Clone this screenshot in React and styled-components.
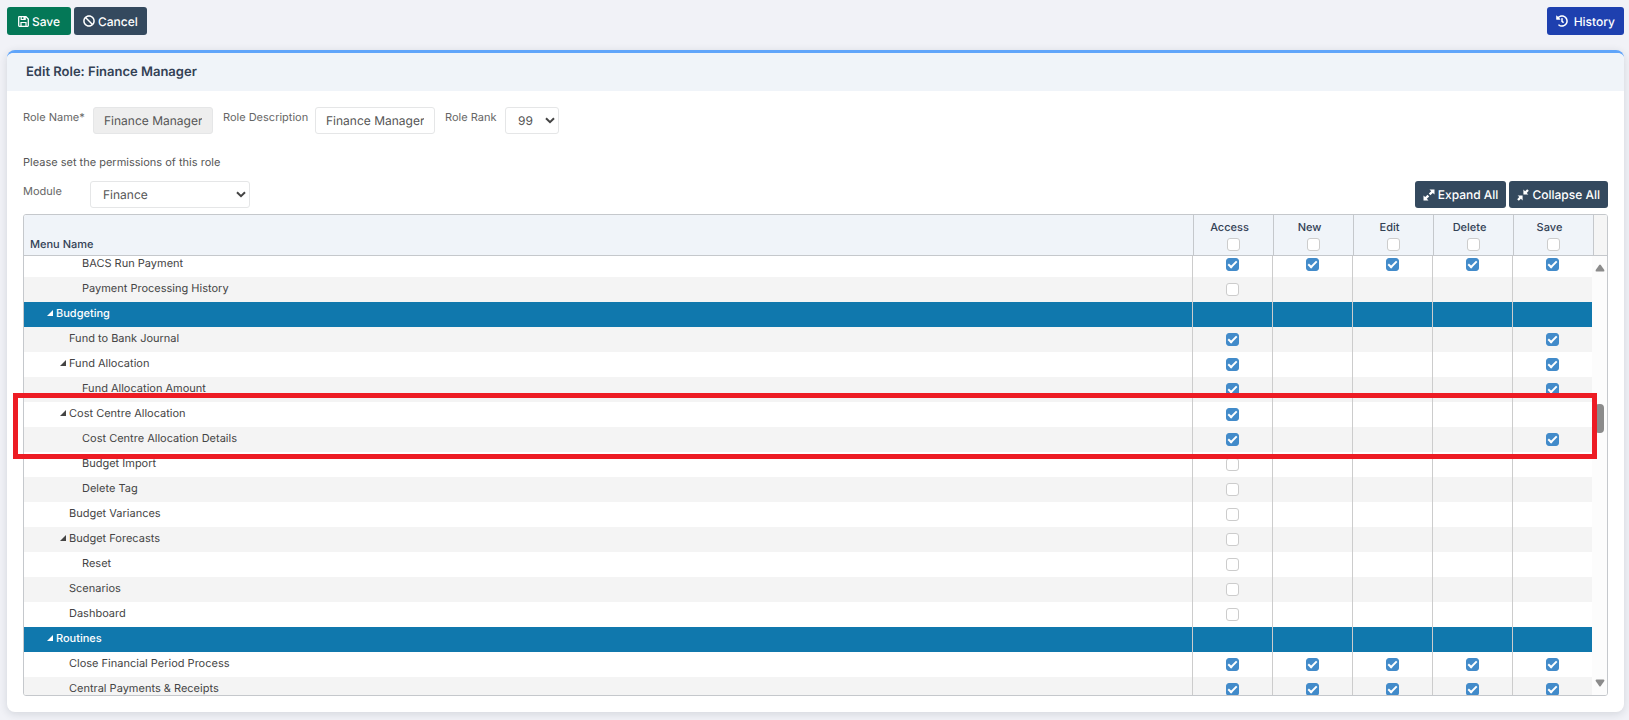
import { useLayoutEffect, useRef } from "react";
import styled, { createGlobalStyle } from "styled-components";
import { FaBan, FaHistory } from "react-icons/fa";

const columns = ["Access", "New", "Edit", "Delete", "Save"];

// boxes: 1 = ticked, 0 = empty, missing = no box in that column
const rows = [
    { name: "BACS Run Payment", level: 3, boxes: [1, 1, 1, 1, 1] },
    { name: "Payment Processing History", level: 3, boxes: [0] },
    { name: "Budgeting", level: 1, group: true, open: true, boxes: [] },
    { name: "Fund to Bank Journal", level: 2, boxes: [1, , , , 1] },
    { name: "Fund Allocation", level: 2, open: true, boxes: [1, , , , 1] },
    { name: "Fund Allocation Amount", level: 3, boxes: [1, , , , 1] },
    { name: "Cost Centre Allocation", level: 2, open: true, boxes: [1] },
    { name: "Cost Centre Allocation Details", level: 3, boxes: [1, , , , 1] },
    { name: "Budget Import", level: 3, boxes: [0] },
    { name: "Delete Tag", level: 3, boxes: [0] },
    { name: "Budget Variances", level: 2, boxes: [0] },
    { name: "Budget Forecasts", level: 2, open: true, boxes: [0] },
    { name: "Reset", level: 3, boxes: [0] },
    { name: "Scenarios", level: 2, boxes: [0] },
    { name: "Dashboard", level: 2, boxes: [0] },
    { name: "Routines", level: 1, group: true, open: true, boxes: [] },
    { name: "Close Financial Period Process", level: 2, boxes: [1, 1, 1, 1, 1] },
    { name: "Central Payments & Receipts", level: 2, boxes: [1, 1, 1, 1, 1] },
];

function PermissionGrid() {
    const pane = useRef(null);

    useLayoutEffect(() => {
        pane.current.scrollTop = 4;
    }, []);

    return (
        <GridWrap>
            <Grid>
                <HeadRow>
                    <Table>
                        <thead>
                            <tr>
                                <MenuHead scope="col">Menu Name</MenuHead>
                                {columns.map((column) => (
                                    <ColumnHead scope="col" key={column}>
                                        <label>
                                            <span>{column}</span>
                                            <Checkbox type="checkbox" />
                                        </label>
                                    </ColumnHead>
                                ))}
                            </tr>
                        </thead>
                    </Table>
                    <HeadCorner />
                </HeadRow>
                <BodyRow>
                    <Pane ref={pane}>
                        <Table>
                            <tbody>
                                {rows.map((row) => (
                                    <Row key={row.name} $group={row.group}>
                                        <NameCell $level={row.level}>
                                            <Name>
                                                <Arrow>
                                                    {row.open && (
                                                        <svg width="6" height="6" viewBox="0 0 6 6">
                                                            <path d="M6 0v6H0z" fill="currentColor" />
                                                        </svg>
                                                    )}
                                                </Arrow>
                                                {row.name}
                                            </Name>
                                        </NameCell>
                                        {columns.map((column, i) => (
                                            <BoxCell key={column}>
                                                {row.boxes[i] !== undefined && (
                                                    <Checkbox
                                                        type="checkbox"
                                                        aria-label={row.name + " " + column}
                                                        defaultChecked={row.boxes[i] === 1}
                                                    />
                                                )}
                                            </BoxCell>
                                        ))}
                                    </Row>
                                ))}
                            </tbody>
                        </Table>
                    </Pane>
                    <Scrollbar>
                        <svg width="10" height="8" viewBox="0 0 10 8">
                            <path d="M4.2 1Q5 0 5.800 1L9.300 6Q9.800 7.500 8.500 7.500H1.500Q.2 7.500.7 6z" fill="#8b8b8b" />
                        </svg>
                        <Track>
                            <Thumb />
                        </Track>
                        <svg width="10" height="8" viewBox="0 0 10 8">
                            <path d="M4.2 7Q5 8 5.800 7L9.300 2Q9.800.5 8.500.5H1.500Q.2.5.7 2z" fill="#8b8b8b" />
                        </svg>
                    </Scrollbar>
                </BodyRow>
            </Grid>
            <Highlight />
        </GridWrap>
    );
}

function App() {
    return (
        <Page>
            <GlobalStyle />
            <Toolbar>
                <Button $color="#047857">
                    <SaveIcon />
                    Save
                </Button>
                <Button $color="#34495e">
                    <FaBan />
                    Cancel
                </Button>
                <Spacer />
                <Button $color="#1e40af" $wide>
                    <FaHistory />
                    History
                </Button>
            </Toolbar>
            <Card>
                <CardHeader>
                    <h1>Edit Role: Finance Manager</h1>
                </CardHeader>
                <CardBody>
                    <Fields>
                        <Label htmlFor="roleName" $width="60px">Role Name*</Label>
                        <Input id="roleName" defaultValue="Finance Manager" disabled />
                        <Label htmlFor="roleDescription" $width="82px">Role Description</Label>
                        <Input id="roleDescription" defaultValue="Finance Manager" />
                        <Label htmlFor="roleRank" $width="50px">Role Rank</Label>
                        <SelectWrap $width="54px">
                            <select id="roleRank" defaultValue="99">
                                <option>99</option>
                            </select>
                            <Chevron />
                        </SelectWrap>
                    </Fields>
                    <Hint>Please set the permissions of this role</Hint>
                    <ModuleRow>
                        <Label htmlFor="module" $width="56px">Module</Label>
                        <SelectWrap $width="160px">
                            <select id="module" defaultValue="Finance">
                                <option>Finance</option>
                            </select>
                            <Chevron />
                        </SelectWrap>
                        <Spacer />
                        <Button $color="#34495e" $small>
                            <ExpandIcon />
                            Expand All
                        </Button>
                        <Button $color="#34495e" $small>
                            <CollapseIcon />
                            Collapse All
                        </Button>
                    </ModuleRow>
                    <PermissionGrid />
                </CardBody>
            </Card>
        </Page>
    );
}

function SaveIcon() {
    return (
        <svg width="11" height="11" viewBox="0 0 11 11" fill="none" stroke="currentColor" aria-hidden="true">
            <path d="M1.200.7H8L10.300 3v6.600q0 .7-.7.7H1.400q-.7 0-.7-.7V1.400q0-.7.5-.7z" strokeWidth="1.300" />
            <path d="M3.200 1v2.500h4V1M3 10V6.500h5V10" strokeWidth="1.200" />
            <path d="M6.200 1v2.500" strokeWidth="1.500" />
        </svg>
    );
}

function ExpandIcon() {
    return (
        <svg width="12" height="12" viewBox="0 0 12 12" fill="currentColor" aria-hidden="true">
            <path d="M6.500.5h5v5L9.800 3.900 7.400 6.200 5.800 4.600 8.200 2.200zM5.500 11.500h-5v-5l1.700 1.600 2.400-2.300 1.600 1.600-2.400 2.400z" />
        </svg>
    );
}

function CollapseIcon() {
    return (
        <svg width="12" height="12" viewBox="0 0 12 12" fill="currentColor" aria-hidden="true">
            <path d="M6.400 5.600v-5l1.700 1.700L10.200.2l1.600 1.600-2.100 2.100 1.700 1.700zM5.600 6.400v5L3.900 9.700 1.800 11.800.2 10.200l2.100-2.100L.6 6.400z" />
        </svg>
    );
}

function Chevron() {
    return (
        <svg width="10" height="7" viewBox="0 0 10 7" fill="none" aria-hidden="true">
            <path d="M1 1.200l4 4 4-4" stroke="#444" strokeWidth="2" />
        </svg>
    );
}

const GlobalStyle = createGlobalStyle`
    *, *::after {
        box-sizing: border-box;
    }
    body {
        margin: 0;
        background: #f1f2f7;
        color: #444;
        font-family: Inter, "Liberation Sans", sans-serif;
        font-size: 11px;
        line-height: 16px;
        text-rendering: geometricPrecision;
    }
    button, input, select {
        font-family: inherit;
        text-rendering: inherit;
    }
`

const Page = styled.div`
    padding: 7px 5px 8px 7px;
`

const Toolbar = styled.div`
    display: flex;
    gap: 3px;
    margin-bottom: 15px;
`

const Spacer = styled.div`
    flex: 1;
`

const Button = styled.button`
    display: flex;
    align-items: center;
    justify-content: center;
    gap: ${(props) => (props.$wide ? "6px" : "3px")};
    min-width: 64px;
    height: ${(props) => (props.$small ? "27px" : "28px")};
    padding: 0 ${(props) => (props.$small ? "8px" : "9px")};
    border: none;
    border-radius: 3px;
    background: ${(props) => props.$color};
    color: white;
    font-size: 12px;
    font-weight: 500;
    cursor: pointer;
`

const Card = styled.section`
    border-top: 3px solid #60a5fa;
    border-radius: 8px;
    background: white;
    box-shadow: 0 2px 8px rgba(30, 41, 59, 0.14);
`

const CardHeader = styled.header`
    padding: 10px 19px;
    background: #f0f4f9;
    border-radius: 6px 6px 0 0;
    h1 {
        margin: 0;
        color: #334155;
        font-size: 13px;
        font-weight: 600;
        line-height: 18px;
    }
`

const CardBody = styled.div`
    padding: 16px;
`

const Fields = styled.div`
    display: flex;
    gap: 10px;
    align-items: flex-start;
`

const Label = styled.label`
    padding-top: 2px;
    width: ${(props) => props.$width};
    color: #666;
    white-space: nowrap;
`

const Input = styled.input`
    width: 120px;
    height: 27px;
    padding: 0 10px;
    border: 1px solid #e5e6e7;
    border-radius: 3px;
    background: white;
    color: #555;
    font-size: 12px;
    &:disabled {
        background: #eee;
    }
`

const SelectWrap = styled.div`
    position: relative;
    width: ${(props) => props.$width};
    select {
        appearance: none;
        width: 100%;
        height: 27px;
        padding: 0 12px;
        border: 1px solid #e5e6e7;
        border-radius: 3px;
        background: white;
        color: #555;
        font-size: 12px;
    }
    svg {
        position: absolute;
        right: 4px;
        top: 10px;
        pointer-events: none;
    }
`

const Hint = styled.p`
    margin: 20px 0 11px;
    color: #555;
`

const ModuleRow = styled.div`
    display: flex;
    gap: 3px;
    margin-bottom: 6px;
    ${SelectWrap} {
        margin-left: 8px;
    }
`

const GridWrap = styled.div`
    position: relative;
`

const Grid = styled.div`
    overflow: hidden;
    border: 1px solid #c5c8cc;
    border-radius: 3px;
`

const HeadRow = styled.div`
    display: flex;
    background: #f0f4f9;
    border-bottom: 1px solid #c5c8cc;
`

const HeadCorner = styled.div`
    width: 14px;
    flex-shrink: 0;
    background: #f5f5f5;
    border-left: 1px solid #c5c8cc;
`

const Table = styled.table`
    flex: 1;
    width: 100%;
    table-layout: fixed;
    border-collapse: separate;
    border-spacing: 0;
`

const MenuHead = styled.th`
    height: 40px;
    padding: 0 6px 3px;
    color: #334155;
    font-weight: 500;
    text-align: left;
    vertical-align: bottom;
`

const ColumnHead = styled.th`
    width: 80px;
    padding: 4px 0 0;
    border-left: 1px solid #c5c8cc;
    color: #334155;
    font-weight: 500;
    vertical-align: top;
    label {
        display: flex;
        flex-direction: column;
        align-items: center;
        gap: 3px;
    }
    span {
        padding-right: 8px;
    }
`

const BodyRow = styled.div`
    display: flex;
    height: 439px;
`

const Pane = styled.div`
    flex: 1;
    overflow: hidden;
`

const BoxCell = styled.td`
    width: 80px;
    padding: 0;
    border-left: 1px solid #ccc;
    text-align: center;
`

const NameCell = styled.td`
    padding: 0 0 3px ${(props) => 10 + props.$level * 13}px;
`

const Name = styled.div`
    display: flex;
    align-items: center;
`

const Arrow = styled.span`
    display: flex;
    width: 9px;
`

const Row = styled.tr`
    height: 25px;
    background: ${(props) => (props.$group ? "#1078ad" : "white")};
    color: ${(props) => (props.$group ? "white" : "#444")};
    font-weight: ${(props) => (props.$group ? 500 : 400)};
    &:nth-child(even) {
        background: ${(props) => (props.$group ? "#1078ad" : "#f4f4f4")};
    }
`

const Checkbox = styled.input`
    appearance: none;
    display: block;
    width: 13px;
    height: 13px;
    margin: 0 auto;
    border: 1px solid #ccc;
    border-radius: 3px;
    background: white;
    &:checked {
        border-color: #428bca;
        background: #428bca;
    }
    &:checked::after {
        content: "";
        display: block;
        width: 5px;
        height: 9px;
        margin: 0 auto;
        border: solid white;
        border-width: 0 2px 2px 0;
        transform: rotate(45deg);
    }
`

const Scrollbar = styled.div`
    display: flex;
    flex-direction: column;
    align-items: center;
    width: 15px;
    padding: 8px 0;
    background: #fcfcfc;
`

const Track = styled.div`
    flex: 1;
    padding-top: 132px;
`

const Thumb = styled.div`
    width: 9px;
    height: 29px;
    border-radius: 4px;
    background: #8b8b8b;
`

const Highlight = styled.div`
    position: absolute;
    left: -10px;
    right: 11px;
    top: 179px;
    height: 66px;
    border: 5px solid #ed1c24;
    pointer-events: none;
`

export default App;
